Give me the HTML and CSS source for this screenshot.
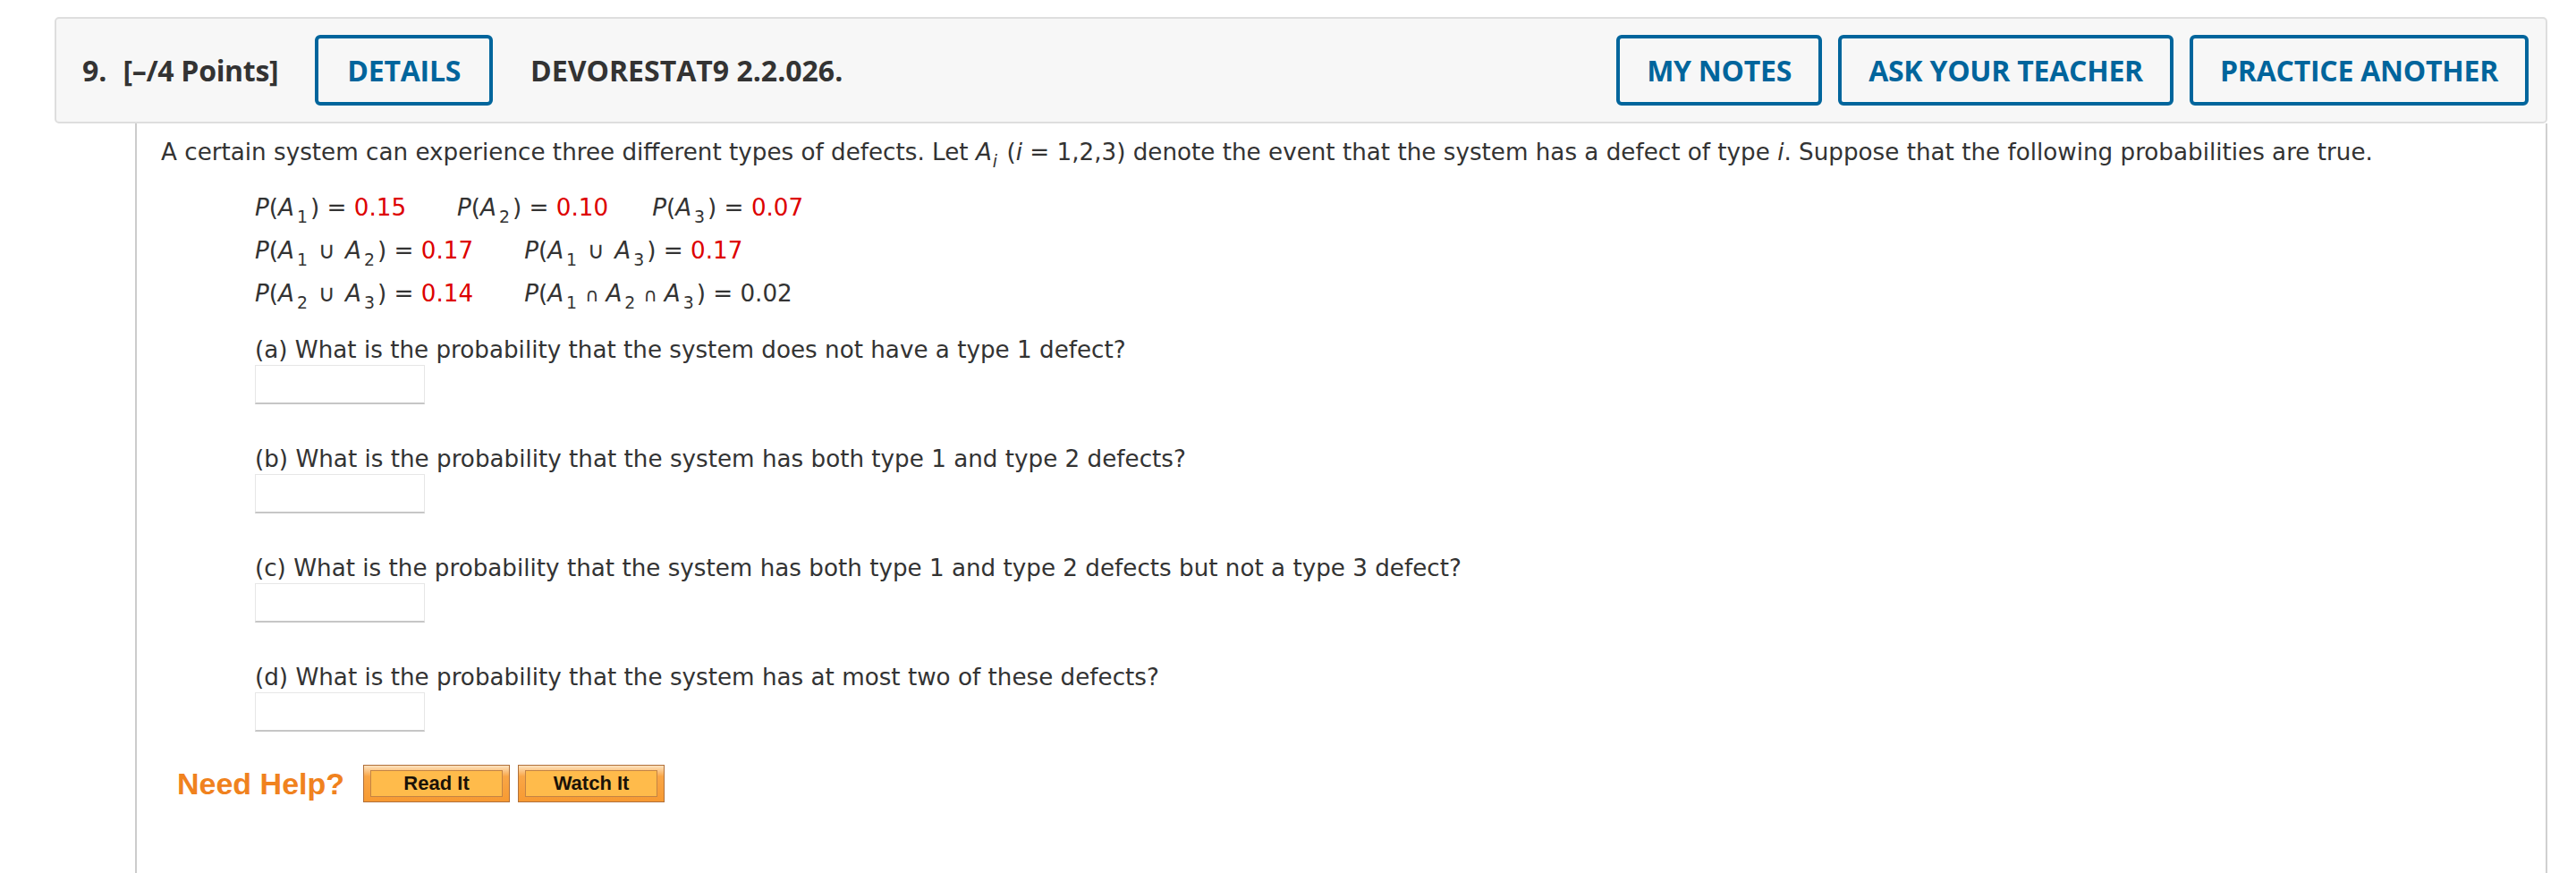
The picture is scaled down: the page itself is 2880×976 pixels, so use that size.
FILE: index.html
```html
<!DOCTYPE html>
<html>
<head>
<meta charset="utf-8">
<link rel="stylesheet" href="styles.css">
</head>
<body>
<div class="page">
  <div class="qhead">
    <span class="qnum">9.</span>
    <span class="qpts">[–/4 Points]</span>
    <span class="btn details">DETAILS</span>
    <span class="qid">DEVORESTAT9 2.2.026.</span>
    <div class="actions">
      <span class="btn">MY NOTES</span>
      <span class="btn">ASK YOUR TEACHER</span>
      <span class="btn">PRACTICE ANOTHER</span>
    </div>
  </div>
  <div class="qbody">
    <p class="intro">A certain system can experience three different types of defects. Let <i>A<sub class="sub-i">i</sub></i> (<i>i</i> = 1,2,3) denote the event that the system has a defect of type <i>i</i>. Suppose that the following probabilities are true.</p>
    <div class="inner">
      <div class="math">
        <div class="row"><span class="eq"><i>P</i>(<i>A</i><sub>1</sub>) = <span class="red">0.15</span></span><span class="eq e2"><i>P</i>(<i>A</i><sub>2</sub>) = <span class="red">0.10</span></span><span class="eq"><i>P</i>(<i>A</i><sub>3</sub>) = <span class="red">0.07</span></span></div>
        <div class="row"><span class="eq"><i>P</i>(<i>A</i><sub>1</sub><span class="op">∪</span><i>A</i><sub>2</sub>) = <span class="red">0.17</span></span><span class="eq"><i>P</i>(<i>A</i><sub>1</sub><span class="op">∪</span><i>A</i><sub>3</sub>) = <span class="red">0.17</span></span></div>
        <div class="row"><span class="eq"><i>P</i>(<i>A</i><sub>2</sub><span class="op">∪</span><i>A</i><sub>3</sub>) = <span class="red">0.14</span></span><span class="eq"><i>P</i>(<i>A</i><sub>1</sub><span class="op cap">∩</span><i>A</i><sub>2</sub><span class="op cap">∩</span><i>A</i><sub>3</sub>) = 0.02</span></div>
      </div>
      <div class="part">
        <div class="ptext">(a) What is the probability that the system does not have a type 1 defect?</div>
        <div class="answer"></div>
      </div>
      <div class="part">
        <div class="ptext">(b) What is the probability that the system has both type 1 and type 2 defects?</div>
        <div class="answer"></div>
      </div>
      <div class="part">
        <div class="ptext">(c) What is the probability that the system has both type 1 and type 2 defects but not a type 3 defect?</div>
        <div class="answer"></div>
      </div>
      <div class="part">
        <div class="ptext">(d) What is the probability that the system has at most two of these defects?</div>
        <div class="answer"></div>
      </div>
    </div>
    <div class="help">
      <span class="help-label">Need Help?</span>
      <span class="hbtn"><span class="hbtn-in">Read It</span></span>
      <span class="hbtn"><span class="hbtn-in">Watch It</span></span>
    </div>
  </div>
</div>
</body>
</html>
```

FILE: styles.css
```css
html, body {
  margin: 0;
  padding: 0;
  background: #ffffff;
}
.page {
  padding: 19px 32px 0 61px;
  height: 957px;
  display: flex;
  flex-direction: column;
}
.qhead {
  display: flex;
  align-items: center;
  background: #f7f7f7;
  border: 2px solid #dedede;
  border-radius: 5px;
  padding: 18px 19px 18px 29px;
  font-family: "Open Sans", "Liberation Sans", sans-serif;
  font-weight: 700;
  font-size: 32px;
  color: #333333;
}
.qnum {
  margin-right: 18px;
}
.qpts {
  margin-right: 41px;
  letter-spacing: -0.3px;
}
.btn {
  display: inline-flex;
  align-items: center;
  justify-content: center;
  box-sizing: border-box;
  height: 79px;
  padding: 0 30px;
  border: 4px solid #00659c;
  border-radius: 6px;
  color: #00659c;
  font-weight: 700;
  letter-spacing: -0.25px;
}
.details {
  padding: 0 32px;
}
.qid {
  margin-left: 42px;
}
.actions {
  margin-left: auto;
  display: flex;
  gap: 18px;
}
.qbody {
  flex: 1;
  margin-left: 90px;
  border-left: 2px solid #cccccc;
  border-right: 2px solid #d0d0d0;
  padding: 14px 0 0 27px;
  font-family: "DejaVu Sans", Verdana, sans-serif;
  font-size: 26.2px;
  color: #333333;
}
.intro {
  margin: 0;
  line-height: 36px;
}
.inner {
  margin-left: 105px;
}
.math {
  margin-top: 20px;
}
.row {
  line-height: 48px;
  white-space: nowrap;
}
.eq {
  display: inline-block;
  margin-right: 57px;
}
.e2 {
  margin-right: 49px;
}
sub {
  font-size: 0.72em;
  vertical-align: -0.4em;
  line-height: 0;
  font-style: normal;
  margin: 0 3px 0 3px;
}
.sub-i {
  font-style: italic;
  margin: 0 2px 0 1px;
}
.op {
  margin: 0 11px 0 9px;
}
.red {
  color: #dd0000;
}
.op.cap {
  font-size: 0.8em;
  margin: 0 8px 0 6px;
}
.part {
  margin-bottom: 46px;
}
.math + .part {
  margin-top: 22px;
}
.ptext {
  line-height: 30px;
}
.answer {
  margin-top: 2px;
  width: 190px;
  height: 44px;
  box-sizing: border-box;
  border: 1px solid #e6e6e6;
  border-bottom: 2px solid #c6c6c6;
  background: #ffffff;
}
.help {
  display: flex;
  align-items: center;
  margin-top: -9px;
  margin-left: 18px;
}
.help-label {
  font-family: "Liberation Sans", Arial, sans-serif;
  font-weight: 700;
  font-size: 34px;
  color: #f0821e;
  margin-right: 21px;
}
.hbtn {
  display: flex;
  box-sizing: border-box;
  width: 164px;
  height: 42px;
  margin-right: 9px;
  padding: 5px 7px;
  border: 1px solid #b0703a;
  background: linear-gradient(#fde2bf 0%, #f9a646 30%, #f79a32 100%);
}
.hbtn-in {
  flex: 1;
  display: flex;
  align-items: center;
  justify-content: center;
  border: 1px solid #c48444;
  background: #ffbb4b;
  font-family: "Liberation Sans", Arial, sans-serif;
  font-weight: 700;
  font-size: 22px;
  color: #1a1208;
}
```
